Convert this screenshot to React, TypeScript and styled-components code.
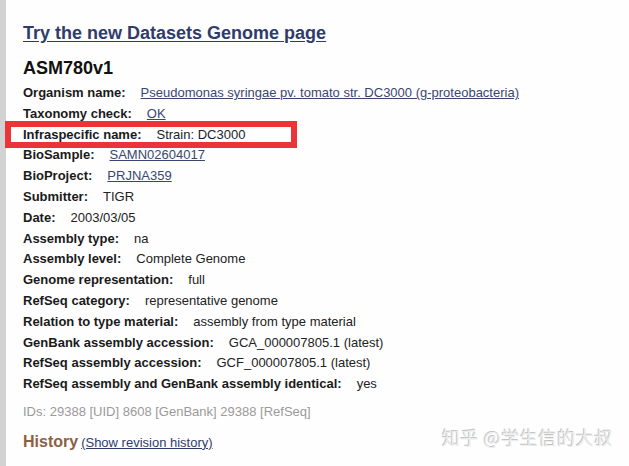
import React from "react"
import styled, { createGlobalStyle } from "styled-components"

const GlobalStyle = createGlobalStyle`
  html, body {
    margin: 0;
    padding: 0;
    background: #fefefe;
  }
  body {
    font-family: "Liberation Sans", Arial, sans-serif;
    color: #1e1e1e;
  }
`

const Page = styled.div`
  position: relative;
  display: flex;
  width: 629px;
  height: 466px;
  overflow: hidden;
`

const SideStrip = styled.div`
  width: 6px;
  flex: none;
  background: #d2d2d2;
`

const Content = styled.div`
  flex: 1;
  padding: 21px 0 0 17px;
`

const Banner = styled.a`
  display: inline-block;
  font-size: 18px;
  font-weight: bold;
  color: #2f3c6b;
  text-decoration: underline;
  text-underline-offset: 2px;
  line-height: 24px;
`

const Accession = styled.h1`
  margin: 11px 0 0;
  font-size: 18px;
  line-height: 24px;
  font-weight: bold;
  color: #111;
`

const Details = styled.dl`
  margin: 3px 0 0;
  padding: 0;
`

const Row = styled.div`
  position: relative;
  display: flex;
  align-items: baseline;
  gap: 15px;
  height: 20.8px;
  line-height: 20.8px;
  font-size: 13px;
`

const Label = styled.dt`
  font-weight: bold;
  color: #1a1a1a;
`

const Value = styled.dd`
  margin: 0;
  color: #222;
`

const DataLink = styled.a`
  color: #3a4670;
  text-decoration: underline;
`

const Highlight = styled.span`
  position: absolute;
  left: -18px;
  top: -4px;
  width: 280px;
  height: 15px;
  border: 6px solid #ec3438;
  pointer-events: none;
`

const Ids = styled.div`
  margin-top: 7px;
  font-size: 13px;
  line-height: 20px;
  color: #9a9a9a;
`

const HistoryLine = styled.div`
  margin-top: 11px;
  display: flex;
  align-items: baseline;
  gap: 3px;
`

const HistoryTitle = styled.span`
  font-size: 16px;
  font-weight: bold;
  color: #8d5f43;
`

const HistoryLink = styled.a`
  font-size: 13px;
  color: #2f3c6b;
  text-decoration: underline;
`

const Watermark = styled.div`
  position: absolute;
  right: 16px;
  bottom: 16px;
  font-family: "Noto Sans CJK SC", sans-serif;
  font-size: 18px;
  color: #ececec;
  text-shadow: -1px -1px 0 #c4c4c4, 1px 1px 0 #ffffff;
  letter-spacing: 0.6px;
`

type Detail = {
  label: string
  value: string
  link?: boolean
  marked?: boolean
}

const details: Detail[] = [
  { label: "Organism name:", value: "Pseudomonas syringae pv. tomato str. DC3000 (g-proteobacteria)", link: true },
  { label: "Taxonomy check:", value: "OK", link: true },
  { label: "Infraspecific name:", value: "Strain: DC3000", marked: true },
  { label: "BioSample:", value: "SAMN02604017", link: true },
  { label: "BioProject:", value: "PRJNA359", link: true },
  { label: "Submitter:", value: "TIGR" },
  { label: "Date:", value: "2003/03/05" },
  { label: "Assembly type:", value: "na" },
  { label: "Assembly level:", value: "Complete Genome" },
  { label: "Genome representation:", value: "full" },
  { label: "RefSeq category:", value: "representative genome" },
  { label: "Relation to type material:", value: "assembly from type material" },
  { label: "GenBank assembly accession:", value: "GCA_000007805.1 (latest)" },
  { label: "RefSeq assembly accession:", value: "GCF_000007805.1 (latest)" },
  { label: "RefSeq assembly and GenBank assembly identical:", value: "yes" },
]

const App = () => {
  return (
    <>
      <GlobalStyle />
      <Page>
        <SideStrip />
        <Content>
          <Banner href="#">Try the new Datasets Genome page</Banner>
          <Accession>ASM780v1</Accession>
          <Details>
            {details.map(d => (
              <Row key={d.label}>
                <Label>{d.label}</Label>
                <Value>{d.link ? <DataLink href="#">{d.value}</DataLink> : d.value}</Value>
                {d.marked && <Highlight />}
              </Row>
            ))}
          </Details>
          <Ids>IDs: 29388 [UID] 8608 [GenBank] 29388 [RefSeq]</Ids>
          <HistoryLine>
            <HistoryTitle>History</HistoryTitle>
            <HistoryLink href="#">(Show revision history)</HistoryLink>
          </HistoryLine>
        </Content>
        <Watermark>知乎 @学生信的大叔</Watermark>
      </Page>
    </>
  )
}

export default App
